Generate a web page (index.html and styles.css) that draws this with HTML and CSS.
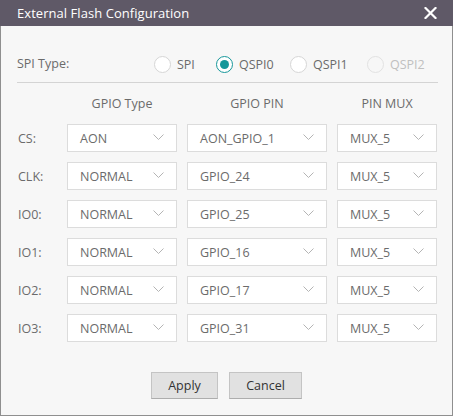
FILE: index.html
```html
<!DOCTYPE html>
<html>
<head>
<meta charset="utf-8">
<link rel="stylesheet" href="styles.css">
</head>
<body>
<div class="dialog">
  <div class="titlebar">
    <span class="title">External Flash Configuration</span>
    <svg class="close" width="13" height="12" viewBox="0 0 13 12"><path d="M1.5 1 L11.5 11 M11.5 1 L1.5 11" stroke="#fff" stroke-width="2.2" stroke-linecap="square"/></svg>
  </div>
  <div class="content">
    <div class="spi-row">
      <span class="spi-label">SPI Type:</span>
      <div class="radios">
        <label class="radio r-spi"><span class="circle"></span><span>SPI</span></label>
        <label class="radio r-q0"><span class="circle checked"></span><span>QSPI0</span></label>
        <label class="radio r-q1"><span class="circle"></span><span>QSPI1</span></label>
        <label class="radio disabled"><span class="circle"></span><span>QSPI2</span></label>
      </div>
    </div>
    <div class="grid">
      <div></div>
      <div class="head">GPIO Type</div>
      <div class="head">GPIO PIN</div>
      <div class="head">PIN MUX</div>

      <div class="lbl">CS:</div>
      <div class="sel"><span>AON</span><svg class="chev" width="11" height="7" viewBox="0 0 11 7"><polyline points="0.5,0.5 5.5,5.5 10.5,0.5" fill="none" stroke="#b4b4b4" stroke-width="1"/></svg></div>
      <div class="sel"><span>AON_GPIO_1</span><svg class="chev" width="11" height="7" viewBox="0 0 11 7"><polyline points="0.5,0.5 5.5,5.5 10.5,0.5" fill="none" stroke="#b4b4b4" stroke-width="1"/></svg></div>
      <div class="sel"><span>MUX_5</span><svg class="chev" width="11" height="7" viewBox="0 0 11 7"><polyline points="0.5,0.5 5.5,5.5 10.5,0.5" fill="none" stroke="#b4b4b4" stroke-width="1"/></svg></div>

      <div class="lbl">CLK:</div>
      <div class="sel"><span>NORMAL</span><svg class="chev" width="11" height="7" viewBox="0 0 11 7"><polyline points="0.5,0.5 5.5,5.5 10.5,0.5" fill="none" stroke="#b4b4b4" stroke-width="1"/></svg></div>
      <div class="sel"><span>GPIO_24</span><svg class="chev" width="11" height="7" viewBox="0 0 11 7"><polyline points="0.5,0.5 5.5,5.5 10.5,0.5" fill="none" stroke="#b4b4b4" stroke-width="1"/></svg></div>
      <div class="sel"><span>MUX_5</span><svg class="chev" width="11" height="7" viewBox="0 0 11 7"><polyline points="0.5,0.5 5.5,5.5 10.5,0.5" fill="none" stroke="#b4b4b4" stroke-width="1"/></svg></div>

      <div class="lbl">IO0:</div>
      <div class="sel"><span>NORMAL</span><svg class="chev" width="11" height="7" viewBox="0 0 11 7"><polyline points="0.5,0.5 5.5,5.5 10.5,0.5" fill="none" stroke="#b4b4b4" stroke-width="1"/></svg></div>
      <div class="sel"><span>GPIO_25</span><svg class="chev" width="11" height="7" viewBox="0 0 11 7"><polyline points="0.5,0.5 5.5,5.5 10.5,0.5" fill="none" stroke="#b4b4b4" stroke-width="1"/></svg></div>
      <div class="sel"><span>MUX_5</span><svg class="chev" width="11" height="7" viewBox="0 0 11 7"><polyline points="0.5,0.5 5.5,5.5 10.5,0.5" fill="none" stroke="#b4b4b4" stroke-width="1"/></svg></div>

      <div class="lbl">IO1:</div>
      <div class="sel"><span>NORMAL</span><svg class="chev" width="11" height="7" viewBox="0 0 11 7"><polyline points="0.5,0.5 5.5,5.5 10.5,0.5" fill="none" stroke="#b4b4b4" stroke-width="1"/></svg></div>
      <div class="sel"><span>GPIO_16</span><svg class="chev" width="11" height="7" viewBox="0 0 11 7"><polyline points="0.5,0.5 5.5,5.5 10.5,0.5" fill="none" stroke="#b4b4b4" stroke-width="1"/></svg></div>
      <div class="sel"><span>MUX_5</span><svg class="chev" width="11" height="7" viewBox="0 0 11 7"><polyline points="0.5,0.5 5.5,5.5 10.5,0.5" fill="none" stroke="#b4b4b4" stroke-width="1"/></svg></div>

      <div class="lbl">IO2:</div>
      <div class="sel"><span>NORMAL</span><svg class="chev" width="11" height="7" viewBox="0 0 11 7"><polyline points="0.5,0.5 5.5,5.5 10.5,0.5" fill="none" stroke="#b4b4b4" stroke-width="1"/></svg></div>
      <div class="sel"><span>GPIO_17</span><svg class="chev" width="11" height="7" viewBox="0 0 11 7"><polyline points="0.5,0.5 5.5,5.5 10.5,0.5" fill="none" stroke="#b4b4b4" stroke-width="1"/></svg></div>
      <div class="sel"><span>MUX_5</span><svg class="chev" width="11" height="7" viewBox="0 0 11 7"><polyline points="0.5,0.5 5.5,5.5 10.5,0.5" fill="none" stroke="#b4b4b4" stroke-width="1"/></svg></div>

      <div class="lbl">IO3:</div>
      <div class="sel"><span>NORMAL</span><svg class="chev" width="11" height="7" viewBox="0 0 11 7"><polyline points="0.5,0.5 5.5,5.5 10.5,0.5" fill="none" stroke="#b4b4b4" stroke-width="1"/></svg></div>
      <div class="sel"><span>GPIO_31</span><svg class="chev" width="11" height="7" viewBox="0 0 11 7"><polyline points="0.5,0.5 5.5,5.5 10.5,0.5" fill="none" stroke="#b4b4b4" stroke-width="1"/></svg></div>
      <div class="sel"><span>MUX_5</span><svg class="chev" width="11" height="7" viewBox="0 0 11 7"><polyline points="0.5,0.5 5.5,5.5 10.5,0.5" fill="none" stroke="#b4b4b4" stroke-width="1"/></svg></div>
    </div>
    <div class="buttons">
      <button class="btn apply">Apply</button>
      <button class="btn cancel">Cancel</button>
    </div>
  </div>
</div>
</body>
</html>
```

FILE: styles.css
```css
html, body {
  margin: 0;
  padding: 0;
  background: #ffffff;
}
body {
  font-family: "Open Sans", "Noto Sans", "Liberation Sans", sans-serif;
  font-size: 12.5px;
  color: #6b6b6b;
}
.dialog {
  box-sizing: border-box;
  width: 453px;
  height: 416px;
  background: #f7f7f7;
  border: 1px solid #8f8f8f;
  border-top: none;
  display: flex;
  flex-direction: column;
}
.titlebar {
  height: 26px;
  margin: 0 -1px;
  background: #5f5967;
  display: flex;
  align-items: center;
  justify-content: space-between;
  padding: 0 16px 0 17px;
  flex-shrink: 0;
}
.title {
  color: #ffffff;
  font-size: 13px;
  letter-spacing: 0.05px;
}
.close {
  display: block;
}
.content {
  padding: 0 14px 0 16px;
  display: flex;
  flex-direction: column;
}
.spi-row {
  margin-top: 27px;
  height: 29px;
  border-bottom: 1px solid #d4d4d4;
  display: flex;
  align-items: flex-start;
}
.spi-label {
  width: 137px;
  line-height: 22px;
}
.radios {
  display: flex;
  align-items: center;
  height: 22px;
}
.radio {
  display: flex;
  align-items: center;
  gap: 6px;
}
.r-spi { width: 62px; }
.r-q0 { width: 74px; }
.r-q1 { width: 77px; }
.circle {
  box-sizing: border-box;
  width: 17px;
  height: 17px;
  border-radius: 50%;
  border: 1px solid #d6d6d6;
  background: #ffffff;
  display: flex;
  align-items: center;
  justify-content: center;
}
.circle.checked {
  border-color: #16979a;
}
.circle.checked::after {
  content: "";
  width: 9px;
  height: 9px;
  border-radius: 50%;
  background: #16979a;
}
.radio.disabled {
  color: #c0c0c0;
}
.radio.disabled .circle {
  border-color: #e2e2e2;
  background: #f7f7f7;
}
.grid {
  display: grid;
  grid-template-columns: 40px 110px 140px 100px;
  grid-template-rows: 21px repeat(6, 28px);
  column-gap: 10px;
  row-gap: 10px;
  margin-top: 10px;
  align-items: center;
}
.head {
  text-align: center;
  align-self: start;
  line-height: 22px;
}
.lbl {
  padding-left: 1px;
}
.sel {
  box-sizing: border-box;
  height: 28px;
  background: #ffffff;
  border: 1px solid #dcdcdc;
  display: flex;
  align-items: center;
  justify-content: space-between;
  padding: 0 12px 0 12px;
}
.chev {
  display: block;
  margin-top: -2px;
}
.buttons {
  display: flex;
  justify-content: center;
  gap: 11px;
  margin-top: 30px;
  margin-left: -16px;
  margin-right: -14px;
}
.btn {
  box-sizing: border-box;
  height: 27px;
  font-family: inherit;
  font-size: 12.5px;
  color: #333333;
  background: #e1e1e1;
  border: 1px solid #c4c4c4;
  border-bottom-color: #adadad;
  padding: 0;
}
.apply { width: 67px; }
.cancel { width: 73px; }
```
